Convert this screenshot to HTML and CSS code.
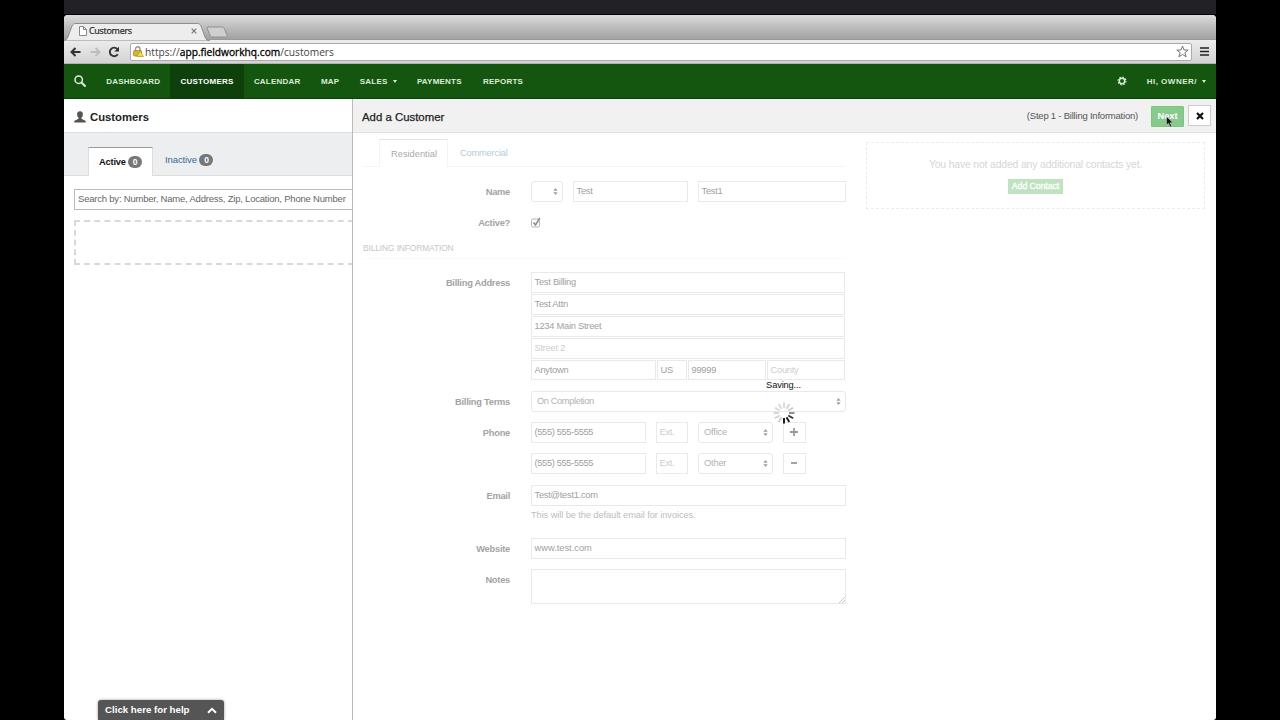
FILE: index.html
```html
<!DOCTYPE HTML>
<html>
<head>
<meta charset="utf-8">
<title>Customers</title>
<link rel="stylesheet" href="styles.css">
</head>

<body>
<div id="desktop"></div>
<div id="window">
	<div id="tabStrip">
		<svg class="tabShape" width="170" height="18" viewBox="0 0 170 18">
			<path d="M0 18 C3 17 4 14 5 11 L8 3 C9 1 10 .5 12 .5 H133 C135 .5 136 1 137 3 L141 14 C142 16.500 143 17.500 146 18 Z" fill="#ededed" stroke="#8d8d8d"/>
			<path d="M143.500 4 H158 C159.500 4 160 5 160.500 6 L163 12 C163.500 13.500 163 14 162 14 H149 C147 14 146.500 13.500 146 12 L143 5 Z" fill="#cfcfcf" stroke="#919191"/>
		</svg>
		<div class="tabLabel">
			<svg width="8" height="10" viewBox="0 0 8 10"><path d="M.5 .5 H4.500 L7.500 3.500 V9.500 H.5 Z M4.500 .5 V3.500 H7.500" fill="#fff" stroke="#888"/></svg>
			<span>Customers</span>
			<svg class="tabClose" width="6" height="6" viewBox="0 0 6 6"><path d="M.7 .7 L5.300 5.300 M5.300 .7 L.7 5.300" stroke="#777" stroke-width="1.200"/></svg>
		</div>
	</div>
	<div id="toolbar">
		<svg class="back" width="11" height="10" viewBox="0 0 11 10"><path d="M10.500 5 H2 M5.500 1 L1.500 5 L5.500 9" fill="none" stroke="#333" stroke-width="2"/></svg>
		<svg class="forward" width="11" height="10" viewBox="0 0 11 10"><path d="M.5 5 H9 M5.500 1 L9.500 5 L5.500 9" fill="none" stroke="#bdbdbd" stroke-width="1.800"/></svg>
		<svg class="reload" width="12" height="12" viewBox="0 0 12 12"><path d="M9.800 8.200 A4.300 4.300 0 1 1 9.300 3" fill="none" stroke="#333" stroke-width="1.900"/><path d="M11 .8 V5.500 H6.300 Z" fill="#333"/></svg>
		<div id="address">
			<svg width="11" height="11" viewBox="0 0 11 11"><path d="M2.500 5 V3 C2.500 0 7 0 7 3 V5" fill="none" stroke="#999" stroke-width="1.400"/><rect x=".5" y="4.500" width="8" height="5.500" rx="1" fill="#d9b52c" stroke="#a08120" stroke-width=".7"/><path d="M7 4.800 L10.500 10.500 H4 Z" fill="#f7dc3e" stroke="#a98c24" stroke-width=".6"/></svg>
			<span class="url">https://<b>app.fieldworkhq.com</b>/customers</span>
			<svg class="star" width="13" height="13" viewBox="0 0 13 13"><path d="M6.500 1 L8 4.900 L12.200 5.100 L8.900 7.700 L10.100 11.800 L6.500 9.400 L2.900 11.800 L4.100 7.700 L.8 5.100 L5 4.900 Z" fill="#fff" stroke="#666" stroke-width=".9"/></svg>
		</div>
		<svg class="menu" width="9" height="9" viewBox="0 0 9 9"><path d="M0 1 H9 M0 4.500 H9 M0 8 H9" stroke="#222" stroke-width="1.700"/></svg>
	</div>

	<div id="nav">
		<svg class="search" width="12" height="12" viewBox="0 0 12 12"><circle cx="4.700" cy="4.700" r="3.700" fill="none" stroke="#dcecd8" stroke-width="1.500"/><path d="M7.500 7.500 L11 11" stroke="#dcecd8" stroke-width="1.900" stroke-linecap="round"/></svg>
		<ul>
			<li>DASHBOARD</li>
			<li class="current">CUSTOMERS</li>
			<li>CALENDAR</li>
			<li>MAP</li>
			<li>SALES<i class="caret"></i></li>
			<li>PAYMENTS</li>
			<li>REPORTS</li>
		</ul>
		<svg class="gear" width="10" height="10" viewBox="0 0 10 10"><circle cx="5" cy="5" r="2.700" fill="none" stroke="#dcecd8" stroke-width="1.500"/><circle cx="5" cy="5" r="3.900" fill="none" stroke="#dcecd8" stroke-width="1.200" stroke-dasharray="1.530 1.530"/></svg>
		<div class="user">HI, OWNER/<i class="caret"></i></div>
	</div>

	<div id="main">
		<div id="customers">
			<div class="head">
				<svg width="12" height="12" viewBox="0 0 12 12"><path d="M6 .3 C8.200 .3 9 1.800 8.900 3.700 C8.800 5.200 8.200 6 7.500 6.800 V7.800 C8.500 8.800 11.700 8.800 11.900 11.500 H.1 C.3 8.800 3.500 8.800 4.500 7.800 V6.800 C3.800 6 3.200 5.200 3.100 3.700 C3 1.800 3.800 .3 6 .3 Z" fill="#555"/></svg>
				<span>Customers</span>
			</div>
			<div class="listTabs">
				<div class="on">Active <b class="badge">0</b></div>
				<div class="off">Inactive <b class="badge">0</b></div>
			</div>
			<div class="searchBox">Search by: Number, Name, Address, Zip, Location, Phone Number</div>
			<div class="emptyBox"></div>
		</div>

		<div id="add">
			<div class="head">
				<span class="title">Add a Customer</span>
				<span class="step">(Step 1 - Billing Information)</span>
				<div class="next">Next</div>
				<div class="close"><svg width="8" height="8" viewBox="0 0 8 8"><path d="M1 1 L7 7 M7 1 L1 7" stroke="#111" stroke-width="2.200"/></svg></div>
			</div>
			<div class="panel">
				<div class="form">
					<div class="typeTabs">
						<div class="on">Residential</div>
						<div class="off">Commercial</div>
					</div>
					<div class="row name">
						<label>Name</label>
						<div class="field select prefix"><svg class="updown" width="5" height="7" viewBox="0 0 5 7"><path d="M2.500 0 L4.700 2.700 H.3 Z M2.500 7 L4.700 4.300 H.3 Z"/></svg></div>
						<div class="field first">Test</div>
						<div class="field last">Test1</div>
					</div>
					<div class="row active">
						<label>Active?</label>
						<svg class="check" width="11" height="11" viewBox="0 0 11 11"><rect x=".5" y="2" width="8" height="8" rx="1.500" fill="#fbfbfb" stroke="#b5b5b5"/><path d="M2.500 5.500 L4.500 8 L8.800 1" fill="none" stroke="#8b8b8b" stroke-width="1.500"/></svg>
					</div>
					<div class="legend">BILLING INFORMATION</div>
					<div class="row address">
						<label>Billing Address</label>
						<div class="lines">
							<div class="field">Test Billing</div>
							<div class="field">Test Attn</div>
							<div class="field">1234 Main Street</div>
							<div class="field hint">Street 2</div>
							<div class="city">
								<div class="field">Anytown</div>
								<div class="field">US</div>
								<div class="field">99999</div>
								<div class="field hint">County</div>
							</div>
						</div>
					</div>
					<div class="row terms">
						<label>Billing Terms</label>
						<div class="field select full">On Completion<svg class="updown" width="5" height="7" viewBox="0 0 5 7"><path d="M2.500 0 L4.700 2.700 H.3 Z M2.500 7 L4.700 4.300 H.3 Z"/></svg></div>
					</div>
					<div class="row phone">
						<label>Phone</label>
						<div class="field number">(555) 555-5555</div>
						<div class="field ext hint">Ext.</div>
						<div class="field select kind">Office<svg class="updown" width="5" height="7" viewBox="0 0 5 7"><path d="M2.500 0 L4.700 2.700 H.3 Z M2.500 7 L4.700 4.300 H.3 Z"/></svg></div>
						<div class="field button"><svg width="8" height="8" viewBox="0 0 8 8"><path d="M0 4 H8 M4 0 V8" stroke="#999" stroke-width="1.800"/></svg></div>
					</div>
					<div class="row phone">
						<label></label>
						<div class="field number">(555) 555-5555</div>
						<div class="field ext hint">Ext.</div>
						<div class="field select kind">Other<svg class="updown" width="5" height="7" viewBox="0 0 5 7"><path d="M2.500 0 L4.700 2.700 H.3 Z M2.500 7 L4.700 4.300 H.3 Z"/></svg></div>
						<div class="field button"><svg width="8" height="8" viewBox="0 0 8 8"><path d="M1 4 H7" stroke="#999" stroke-width="1.800"/></svg></div>
					</div>
					<div class="row email">
						<label>Email</label>
						<div class="field full">Test@test1.com</div>
					</div>
					<div class="help">This will be the default email for invoices.</div>
					<div class="row website">
						<label>Website</label>
						<div class="field full">www.test.com</div>
					</div>
					<div class="row notes">
						<label>Notes</label>
						<div class="field full"><svg class="grip" width="7" height="7" viewBox="0 0 7 7"><path d="M1 7 L7 1 M4 7 L7 4" stroke="#bbb" stroke-width=".8"/></svg></div>
					</div>
				</div>
				<div class="contacts">
					<p>You have not added any additional contacts yet.</p>
					<div class="addContact">Add Contact</div>
				</div>
			</div>
		</div>
	</div>
</div>

<div id="saving">
	<div>Saving...</div>
	<svg width="22" height="22" viewBox="-11 -11 22 22" stroke-width="1.900">
		<path d="M0 5 V10.500" stroke="#111"/>
		<path d="M0 5 V10.500" stroke="#1c1c1c" transform="rotate(-30)"/>
		<path d="M0 5 V10.500" stroke="#333" transform="rotate(-60)"/>
		<path d="M0 5 V10.500" stroke="#8c8c8c" transform="rotate(-90)"/>
		<path d="M0 5 V10.500" stroke="#ccc" transform="rotate(-120)"/>
		<path d="M0 5 V10.500" stroke="#d4d4d4" transform="rotate(-150)"/>
		<path d="M0 5 V10.500" stroke="#dadada" transform="rotate(-180)"/>
		<path d="M0 5 V10.500" stroke="#dadada" transform="rotate(-210)"/>
		<path d="M0 5 V10.500" stroke="#dadada" transform="rotate(-240)"/>
		<path d="M0 5 V10.500" stroke="#d4d4d4" transform="rotate(-270)"/>
		<path d="M0 5 V10.500" stroke="#d0d0d0" transform="rotate(-300)"/>
		<path d="M0 5 V10.500" stroke="#ccc" transform="rotate(-330)"/>
	</svg>
</div>

<div id="helpTab">
	<span>Click here for help</span>
	<svg width="10" height="7" viewBox="0 0 10 7"><path d="M1 5.800 L5 1.800 L9 5.800" fill="none" stroke="#fff" stroke-width="2"/></svg>
</div>

<svg id="cursor" width="8" height="12" viewBox="0 0 8 12"><path d="M.5 .5 V9 L2.500 7.300 L4 11 L5.600 10.300 L4.100 6.800 H7 Z" fill="#111" stroke="#ddd" stroke-width=".5"/></svg>
</body>
</html>
```
FILE: styles.css
```css
/* reset start */
html,body{ overflow:hidden; height:100%;}
body,p,ul{ padding:0; margin:0;}
body{ background:#000; font:9.3px/12px "Liberation Sans",Arial,sans-serif; color:#222;}
li{ list-style:none;}
*{ box-sizing:border-box;}
svg{ display:block; flex:none;}
/* reset end */

/* browser start */
#desktop{ width:1152px; height:15px; margin:0 auto; background:#212126; border-bottom:1px solid #050505;}
#window{ width:1152px; height:705px; margin:0 auto; background:#fff; border-radius:4px 4px 3px 3px; overflow:hidden; display:flex; flex-direction:column;}
#tabStrip{ height:25px; flex:none; position:relative; background:linear-gradient(#dcdcdc,#bdbdbd 50%,#a2a2a2); font:9px/12px "Open Sans",sans-serif; color:#222; border-bottom:1px solid #999;}
.tabShape{ position:absolute; left:0; top:8px;}
.tabLabel{ position:absolute; left:15px; top:10px; width:118px; display:flex; align-items:center; gap:2px;}
.tabLabel span{ letter-spacing:-.3px; -webkit-text-stroke:.2px #222;}
.tabClose{ margin-left:auto;}
#toolbar{ height:24px; flex:none; display:flex; align-items:center; padding:0 7px 0 6px; background:linear-gradient(#ededed,#d3d3d3); border-bottom:1px solid #b2b2b2;}
.forward{ margin-left:9px;}
.reload{ margin-left:7px;}
#address{ flex:1; height:18px; margin:0 8px 0 10px; padding:0 2px 0 2px; display:flex; align-items:center; background:#fff; border:1px solid #aaa; border-radius:2px;}
.url{ margin-left:1px; font:10.2px/14px "Open Sans",sans-serif; color:#444;}
.url b{ font-weight:400; color:#000; -webkit-text-stroke:.3px #000;}
.star{ margin-left:auto;}
/* browser end */

/* nav start */
#nav{ height:35px; flex:none; display:flex; align-items:center; padding-right:10px; background:#14560f; border-bottom:1px solid #0d3f0a; color:#dcecd8; font-weight:bold; font-size:8px; letter-spacing:.22px;}
.search{ margin:0 10px;}
#nav ul{ display:flex; height:100%;}
#nav li{ display:flex; align-items:center; height:100%; padding:1px 10.2px 0;}
#nav li:last-child{ padding-left:11px;}
#nav .current{ background:#0e400b; color:#fff;}
.caret{ display:inline-block; margin-left:5px; border:2.5px solid transparent; border-top:3px solid #dcecd8; border-bottom:0;}
.gear{ margin-left:auto;}
.user{ display:flex; align-items:center; margin-left:20px; padding-top:1px; letter-spacing:.5px;}
/* nav end */

/* customers start */
#main{ flex:1; display:flex; min-height:0;}
#customers{ width:288px; flex:none; overflow:hidden;}
#customers .head{ height:34px; display:flex; align-items:center; gap:4px; padding:2px 0 0 10px; border-bottom:1px solid #dedede; font-weight:bold; font-size:11.3px;}
.listTabs{ height:43px; display:flex; padding:14px 0 0 24px; background:#edeef0; border-bottom:1px solid #dcdcdc;}
.listTabs .on{ height:29px; width:65px; padding:8px 0 0 10px; background:#fff; border:1px solid #ddd; border-top-color:#999; border-bottom:0; font-weight:bold; color:#111; font-size:9.3px; letter-spacing:-.2px; white-space:nowrap;}
.listTabs .off{ padding:7px 0 0 12px; color:#366a94; font-size:9.5px; letter-spacing:-.1px; white-space:nowrap;}
.badge{ display:inline-block; width:14px; height:12px; border-radius:6px; background:#777; color:#fff; font-size:8.5px; line-height:12px; text-align:center;}
.searchBox{ height:21px; margin:13px -12px 0 10px; padding:3px; border:1px solid #bbb; color:#666; font-size:9.5px; letter-spacing:-.21px; white-space:nowrap;}
.emptyBox{ height:45px; margin:10px -12px 0 10px; border:2px dashed #d9d9d9;}
/* customers end */

/* add start */
#add{ flex:1; border-left:1px solid #bbb;}
#add .head{ height:34px; display:flex; align-items:center; padding:0 4px 0 9px; background:#f1f1f1; border-bottom:1px solid #e2e2e2;}
#add .title{ margin-top:2px; font-size:11.4px; -webkit-text-stroke:.25px #222;}
#add .step{ margin-left:auto; color:#555; font-size:9.5px; letter-spacing:-.22px;}
.next{ width:33px; height:21px; margin:1px 0 0 13px; border:1px solid #7fc384; border-radius:1px; background:#87cb8c; color:#fff; font-weight:bold; line-height:19px; text-align:center;}
.close{ width:23px; height:21px; margin-left:4px; margin-right:1px; border:1px solid #ccc; background:#fff; display:flex; align-items:center; justify-content:center;}
.panel{ display:flex; justify-content:space-between; padding:0 11px 0 10px;}
.form{ width:483px; color:#aaa;}
/* add end */

/* form start */
.typeTabs{ height:34px; display:flex; padding:6px 0 0 16px; border-bottom:1px solid #f5f5f5;}
.typeTabs .on{ width:69px; height:28px; padding:8px 0 0 11px; border:1px solid #f3f3f3; border-top-color:#e4e4e4; border-bottom:0; background:#fff;}
.typeTabs .off{ padding:8px 0 0 12px; color:#b4cbdc; letter-spacing:-.2px;}
.row{ display:flex;}
label{ width:147px; flex:none; margin-right:21px; padding-top:5px; text-align:right; font-weight:bold; color:#a3a3a3; letter-spacing:-.25px;}
.field{ height:21px; flex:none; padding:3px 2.5px; border:1px solid #e9e9e9; color:#a0a0a0; letter-spacing:-.25px; white-space:nowrap;}
.hint{ color:#cdcdcd;}
.full{ width:315px;}
.select{ display:flex; align-items:center; justify-content:space-between; padding:0 4px 1px 5px; border-radius:3px; color:#b2b2b2; letter-spacing:-.4px;}
.updown{ fill:#a0a0a0;}
.name{ margin-top:14px;}
.prefix{ width:32px; margin-right:10px; justify-content:flex-end;}
.first{ width:115px; margin-right:10px;}
.last{ width:148px;}
.active{ margin-top:10px;}
.check{ margin-top:5px;}
.legend{ height:17px; margin-top:13px; color:#c6c6c6; font-size:8.4px; letter-spacing:-.1px; border-bottom:1px solid #fafafa;}
.address{ margin-top:13px;}
.lines{ display:flex; flex-direction:column; gap:1px; width:314px;}
.city{ display:grid; grid-template-columns:125px 30px 78px 78px; gap:1px;}
.city .field{ height:20px;}
.terms{ margin-top:11px;}
.phone{ margin-top:10px;}
.number{ width:115px; letter-spacing:-.35px;}
.ext{ width:32px; margin-left:10px;}
.kind{ width:75px; margin-left:10px; letter-spacing:-.2px;}
.button{ width:23px; margin-left:10px; padding:0 1px 1px 0; display:flex; align-items:center; justify-content:center;}
.email{ margin-top:11px;}
.help{ margin:3px 0 0 168px; color:#bdbdbd; letter-spacing:-.1px;}
.website{ margin-top:17px;}
.website .field{ letter-spacing:0;}
.notes{ margin-top:10px;}
.notes .field{ height:35px; padding:0; display:flex; align-items:flex-end; justify-content:flex-end;}
.contacts{ width:339px; height:67px; margin-top:9px; padding-top:15px; border:1px dashed #ececec; text-align:center;}
.contacts p{ color:#d6d6d6; font-size:10.4px; letter-spacing:-.15px; padding-top:1px;}
.addContact{ width:55px; height:15px; margin:8px auto 0; background:#bfe3c1; color:#fff; font-size:8.8px; line-height:15px; letter-spacing:-.1px; -webkit-text-stroke:.3px #fff;}
/* form end */

/* overlay start */
#saving{ position:absolute; left:744px; top:379px; width:79px; display:flex; flex-direction:column; align-items:center; gap:11px; color:#111; letter-spacing:-.15px;}
#helpTab{ position:absolute; left:98px; top:700px; width:126px; height:20px; padding:0 7px; display:flex; align-items:center; justify-content:space-between; background:#555; border-radius:3px 3px 0 0; box-shadow:0 0 3px rgba(0,0,0,.4); color:#fff; font-weight:bold; font-size:9.7px;}
#cursor{ position:absolute; left:1166px; top:116px;}
/* overlay end */
```
